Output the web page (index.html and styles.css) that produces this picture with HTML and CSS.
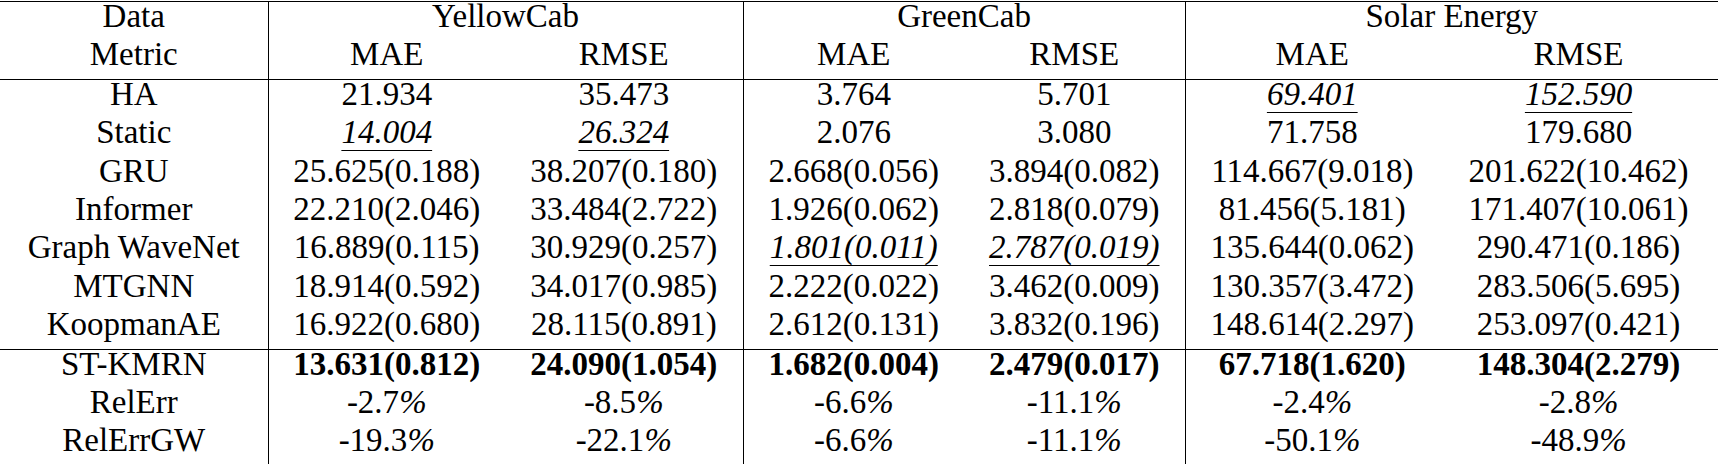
FILE: index.html
```html
<!DOCTYPE html>
<html lang="en">
<head>
<meta charset="utf-8">
<title>Results</title>
<link rel="stylesheet" href="styles.css">
</head>
<body>
<table class="results">
  <colgroup>
    <col class="c-data">
    <col class="c-ym"><col class="c-yr">
    <col class="c-gm"><col class="c-gr">
    <col class="c-sm"><col class="c-sr">
  </colgroup>
  <thead>
    <tr>
      <th class="sep">Data</th>
      <th class="sep" colspan="2">YellowCab</th>
      <th class="sep" colspan="2">GreenCab</th>
      <th colspan="2">Solar Energy</th>
    </tr>
    <tr>
      <th class="sep">Metric</th>
      <th>MAE</th><th class="sep">RMSE</th>
      <th>MAE</th><th class="sep">RMSE</th>
      <th>MAE</th><th>RMSE</th>
    </tr>
  </thead>
  <tbody class="baselines">
    <tr>
      <td class="sep">HA</td>
      <td>21.934</td><td class="sep">35.473</td>
      <td>3.764</td><td class="sep">5.701</td>
      <td><span class="second">69.401</span></td><td><span class="second">152.590</span></td>
    </tr>
    <tr>
      <td class="sep">Static</td>
      <td><span class="second">14.004</span></td><td class="sep"><span class="second">26.324</span></td>
      <td>2.076</td><td class="sep">3.080</td>
      <td>71.758</td><td>179.680</td>
    </tr>
    <tr>
      <td class="sep">GRU</td>
      <td>25.625(0.188)</td><td class="sep">38.207(0.180)</td>
      <td>2.668(0.056)</td><td class="sep">3.894(0.082)</td>
      <td>114.667(9.018)</td><td>201.622(10.462)</td>
    </tr>
    <tr>
      <td class="sep">Informer</td>
      <td>22.210(2.046)</td><td class="sep">33.484(2.722)</td>
      <td>1.926(0.062)</td><td class="sep">2.818(0.079)</td>
      <td>81.456(5.181)</td><td>171.407(10.061)</td>
    </tr>
    <tr>
      <td class="sep">Graph WaveNet</td>
      <td>16.889(0.115)</td><td class="sep">30.929(0.257)</td>
      <td><span class="second">1.801(0.011)</span></td><td class="sep"><span class="second">2.787(0.019)</span></td>
      <td>135.644(0.062)</td><td>290.471(0.186)</td>
    </tr>
    <tr>
      <td class="sep">MTGNN</td>
      <td>18.914(0.592)</td><td class="sep">34.017(0.985)</td>
      <td>2.222(0.022)</td><td class="sep">3.462(0.009)</td>
      <td>130.357(3.472)</td><td>283.506(5.695)</td>
    </tr>
    <tr>
      <td class="sep">KoopmanAE</td>
      <td>16.922(0.680)</td><td class="sep">28.115(0.891)</td>
      <td>2.612(0.131)</td><td class="sep">3.832(0.196)</td>
      <td>148.614(2.297)</td><td>253.097(0.421)</td>
    </tr>
  </tbody>
  <tbody class="ours">
    <tr class="best">
      <td class="sep">ST-KMRN</td>
      <td><b>13.631(0.812)</b></td><td class="sep"><b>24.090(1.054)</b></td>
      <td><b>1.682(0.004)</b></td><td class="sep"><b>2.479(0.017)</b></td>
      <td><b>67.718(1.620)</b></td><td><b>148.304(2.279)</b></td>
    </tr>
    <tr>
      <td class="sep">RelErr</td>
      <td>-2.7<span class="pct">%</span></td><td class="sep">-8.5<span class="pct">%</span></td>
      <td>-6.6<span class="pct">%</span></td><td class="sep">-11.1<span class="pct">%</span></td>
      <td>-2.4<span class="pct">%</span></td><td>-2.8<span class="pct">%</span></td>
    </tr>
    <tr>
      <td class="sep">RelErrGW</td>
      <td>-19.3<span class="pct">%</span></td><td class="sep">-22.1<span class="pct">%</span></td>
      <td>-6.6<span class="pct">%</span></td><td class="sep">-11.1<span class="pct">%</span></td>
      <td>-50.1<span class="pct">%</span></td><td>-48.9<span class="pct">%</span></td>
    </tr>
  </tbody>
</table>
</body>
</html>
```

FILE: styles.css
```css
html, body {
  margin: 0;
  padding: 0;
  background: #ffffff;
}

body {
  padding-top: 1px;
  font-family: "Liberation Serif", "Times New Roman", serif;
  color: #000000;
}

.results {
  width: 1718px;
  table-layout: fixed;
  border-collapse: collapse;
  border-top: 1px solid #000;
  border-bottom: 1px solid #000;
  font-size: 33px;
}

.c-data { width: 268px; }
.c-ym { width: 237px; }
.c-yr { width: 238px; }
.c-gm { width: 221px; }
.c-gr { width: 221px; }
.c-sm { width: 254px; }
.c-sr { width: 279px; }

.results th,
.results td {
  box-sizing: border-box;
  height: 38.4px;
  padding: 0 0 10.4px 0;
  line-height: 28px;
  text-align: center;
  vertical-align: middle;
  white-space: nowrap;
  font-weight: normal;
}

.results .sep {
  border-right: 1px solid #000;
}

.results thead {
  border-bottom: 1px solid #000;
}

.results tbody.ours {
  border-top: 1px solid #000;
}

.second {
  font-style: italic;
  text-decoration: underline;
  text-decoration-thickness: 1.2px;
  text-underline-offset: 7px;
}

.pct {
  font-style: italic;
}

.best b {
  font-weight: bold;
}
```
